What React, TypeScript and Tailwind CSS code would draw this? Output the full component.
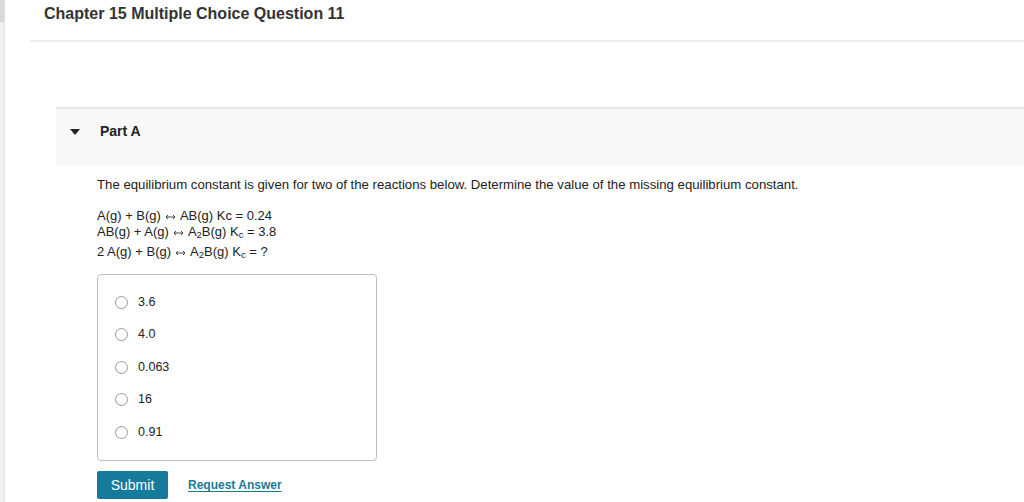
import React, { useState } from 'react';

const choices = ['3.6', '4.0', '0.063', '16', '0.91'];

const Arrow = () => (
  <svg width="11" height="6" viewBox="0 0 11 6" className="inline-block mx-[4px] align-middle">
    <path d="M1 3 H10 M3 1 L1 3 L3 5 M8 1 L10 3 L8 5" stroke="#333" strokeWidth="0.9" fill="none" />
  </svg>
);

export default function App() {
  const [picked, setPicked] = useState<string | null>(null);

  return (
    <div className="flex min-h-[502px] bg-white text-[#222] font-['Liberation_Sans',Arial,sans-serif]">
      <div className="w-[5px] shrink-0 bg-[#f1f1f1] border-r border-[#e2e2e2]">
        <div className="h-[22px] bg-[#d9d9d9]" />
      </div>

      <div className="flex-1 flex flex-col">
        <h1 className="pl-[39px] pt-[2px] h-[40px] text-[16px] font-bold text-[#333]">
          Chapter 15 Multiple Choice Question 11
        </h1>
        <div className="ml-[25px] h-[2px] bg-[#ededed]" />

        <div className="mt-[65px] ml-[51px] border-t-2 border-[#e8e8e8] bg-[#f8f8f8] h-[59px] flex items-start pt-[14px]">
          <svg width="10" height="6" viewBox="0 0 10 6" className="ml-[14px] mt-[6px]">
            <path d="M0 0 L10 0 L5 6 Z" fill="#222" />
          </svg>
          <span className="ml-[20px] text-[14px] leading-[16px] font-bold text-[#222]">Part A</span>
        </div>

        <div className="pl-[92px] pt-[11px]">
          <p className="text-[13.2px] leading-[16px] text-[#222]">
            The equilibrium constant is given for two of the reactions below. Determine the value of the missing equilibrium constant.
          </p>

          <div className="mt-[15px] text-[13px] leading-[16px]">
            <div>A(g) + B(g)<Arrow />AB(g) Kc = 0.24</div>
            <div>AB(g) + A(g)<Arrow />A<sub className="text-[9.5px]">2</sub>B(g) K<sub className="text-[9.5px]">c</sub> = 3.8</div>
            <div className="mt-[4px]">2 A(g) + B(g)<Arrow />A<sub className="text-[9.5px]">2</sub>B(g) K<sub className="text-[9.5px]">c</sub> = ?</div>
          </div>

          <div className="mt-[14px] w-[280px] h-[187px] border border-[#bdbdbd] rounded-[4px] pt-[11px] pl-[17px] flex flex-col">
            {choices.map((c) => (
              <label key={c} className="flex items-center h-[32.5px] cursor-pointer">
                <span className="w-[13px] h-[13px] rounded-full border border-[#999] bg-white flex items-center justify-center">
                  {picked === c && <span className="w-[6px] h-[6px] rounded-full bg-[#1a7a9b]" />}
                </span>
                <input
                  type="radio"
                  name="choice"
                  className="hidden"
                  checked={picked === c}
                  onChange={() => setPicked(c)}
                />
                <span className="ml-[10px] text-[12.5px] text-[#222]">{c}</span>
              </label>
            ))}
          </div>

          <div className="mt-[10px] flex items-center">
            <button className="w-[71px] h-[28px] rounded-[2px] bg-[#167a9b] text-white text-[14px]">
              Submit
            </button>
            <a className="ml-[20px] text-[12px] font-bold text-[#1a7a9b] underline underline-offset-2 cursor-pointer">
              Request Answer
            </a>
          </div>
        </div>
      </div>
    </div>
  );
}
